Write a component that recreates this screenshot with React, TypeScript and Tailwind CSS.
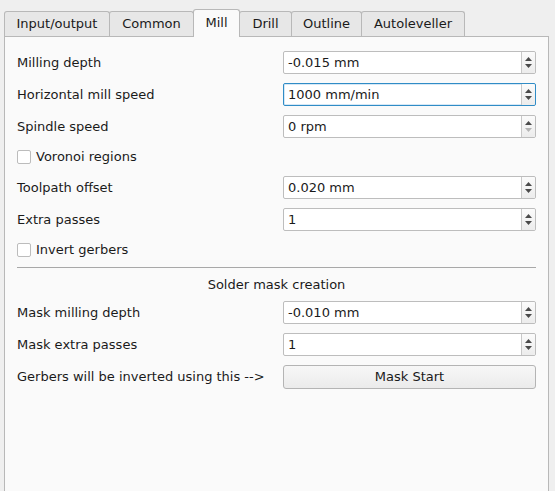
import React from 'react';

const font = { fontFamily: '"DejaVu Sans", "Liberation Sans", sans-serif' };

const tabs = [
  { label: 'Input/output', w: 'w-[106px]' },
  { label: 'Common', w: 'w-[85px]' },
  { label: 'Mill', w: 'w-[47px]', active: true },
  { label: 'Drill', w: 'w-[53px]' },
  { label: 'Outline', w: 'w-[71px]' },
  { label: 'Autoleveller', w: 'w-[104px]' },
];

const Arrows: React.FC<{ downDisabled?: boolean }> = ({ downDisabled }) => (
  <div className="flex w-[14px] flex-col items-center justify-center gap-[3px] border-l border-[#c8c8c8] bg-gradient-to-b from-[#fbfbfb] to-[#ececec] rounded-r-[2px]">
    <svg width="7" height="4" viewBox="0 0 7 4">
      <path d="M0 4 L3.5 0 L7 4 Z" fill="#4a4a4a" />
    </svg>
    <svg width="7" height="4" viewBox="0 0 7 4">
      <path d="M0 0 L3.5 4 L7 0 Z" fill={downDisabled ? '#b4b4b4' : '#4a4a4a'} />
    </svg>
  </div>
);

const SpinBox: React.FC<{ value: string; focused?: boolean; downDisabled?: boolean }> = ({ value, focused, downDisabled }) => (
  <div
    className={`flex h-[23px] w-[253px] rounded-[2px] border bg-white ${
      focused ? 'border-[#308cc6] shadow-[inset_0_0_0_1px_#d6e8f6]' : 'border-[#bdbdbd]'
    }`}
  >
    <div className="flex flex-1 items-center pl-[4px] text-[13px] text-[#1a1a1a]">{value}</div>
    <Arrows downDisabled={downDisabled} />
  </div>
);

const Row: React.FC<{ label: string; children: React.ReactNode }> = ({ label, children }) => (
  <div className="flex items-center">
    <div className="w-[266px] text-[13px] text-[#1a1a1a]">{label}</div>
    {children}
  </div>
);

const Check: React.FC<{ label: string }> = ({ label }) => (
  <div className="flex h-[20px] items-center gap-[5px]">
    <div className="h-[14px] w-[14px] rounded-[2px] border border-[#bcbcbc] bg-white" />
    <span className="text-[13px] text-[#1a1a1a]">{label}</span>
  </div>
);

export default function App() {
  return (
    <div className="flex h-[491px] w-[555px] flex-col bg-[#efefef] pl-[4px] pr-[6px] pt-[9px]" style={font}>
      <div className="flex items-end">
        {tabs.map((t, i) => (
          <div
            key={t.label}
            className={`${t.w} ${i > 0 ? '-ml-px' : ''} flex items-center justify-center rounded-t-[3px] border border-b-0 border-[#b8b8b8] text-[13px] text-[#1a1a1a] ${
              t.active ? 'relative z-10 -mb-px h-[28px] bg-[#fafafa] pb-px' : 'h-[25px] bg-[#e7e7e7]'
            }`}
          >
            {t.label}
          </div>
        ))}
      </div>
      <div className="flex flex-1 flex-col gap-[9px] border border-b-0 border-[#b8b8b8] bg-[#fafafa] px-[12px] pt-[14px]">
        <Row label="Milling depth">
          <SpinBox value="-0.015 mm" />
        </Row>
        <Row label="Horizontal mill speed">
          <SpinBox value="1000 mm/min" focused />
        </Row>
        <Row label="Spindle speed">
          <SpinBox value="0 rpm" downDisabled />
        </Row>
        <Check label="Voronoi regions" />
        <Row label="Toolpath offset">
          <SpinBox value="0.020 mm" />
        </Row>
        <Row label="Extra passes">
          <SpinBox value="1" />
        </Row>
        <Check label="Invert gerbers" />
        <div className="-mt-[2px] h-px bg-[#a8a8a8]" />
        <div className="flex h-[15px] items-center justify-center text-[13px] text-[#1a1a1a]">Solder mask creation</div>
        <Row label="Mask milling depth">
          <SpinBox value="-0.010 mm" />
        </Row>
        <Row label="Mask extra passes">
          <SpinBox value="1" />
        </Row>
        <Row label="Gerbers will be inverted using this -->">
          <button className="flex h-[24px] w-[253px] items-center justify-center rounded-[3px] border border-[#b4b4b4] bg-gradient-to-b from-[#f7f7f7] to-[#ebebeb] text-[13px] text-[#1a1a1a]">
            Mask Start
          </button>
        </Row>
      </div>
    </div>
  );
}
